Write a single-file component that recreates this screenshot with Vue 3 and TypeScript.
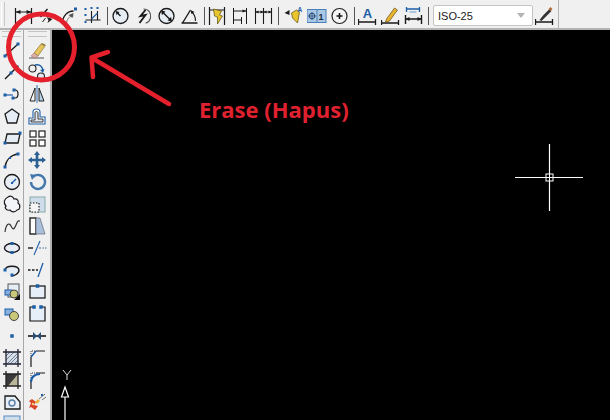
<script setup lang="ts">
const K = '#1a1a1a'
const B = '#1d5ea8'
const ln = (d: string, c = K, w = 1.2) => `<path d="${d}" fill="none" stroke="${c}" stroke-width="${w}"/>`
const node = (x: number, y: number, s = 3) => `<rect x="${x - s / 2}" y="${y - s / 2}" width="${s}" height="${s}" fill="${B}"/>`
const tri = (d: string, c = K) => `<path d="${d}" fill="${c}"/>`
const circ = (r = 7.5, fill = '#e6edf5') => `<circle cx="10" cy="10" r="${r}" fill="${fill}" stroke="${K}" stroke-width="1.3"/>`

const icons: Record<string, string> = {
  dimLinear: ln('M2 2V18M18 2V18M2 6H18') + tri('M2 6l5-2v4zM18 6l-5-2v4z'),
  dimAligned: ln('M4 11 11 3', K, 1.5) + tri('M10 11l6 2-5 4 1-3z') + ln('M6 16l3-4', K, 1),
  dimArc: ln('M3 17C3 10 8 5 14 5', K, 1.4) + ln('M7 18C7 13 10 10 14 10', '#777', 1) + node(16, 3, 3) + tri('M9 9l5-2-1 5z', '#555'),
  dimOrd: ln('M9 5V17M15 5V14M3 14H18', K, 1.1) + node(3, 3, 2) + node(3, 9, 2) + node(3, 16, 2) + node(9, 2, 2) + node(15, 2, 2) + ln('M9 13 15 7', B, 1.1),
  dimRadius: circ() + ln('M10 10 6 6', K, 1.5) + tri('M5 5l4 1-3 3z'),
  dimJog: ln('M10 3C15 3 18 7 17 12C16 15 14 17 12 17', '#555', 1.2) + ln('M12 4 7 10 12 9 6 17', K, 1.9),
  dimDia: circ() + ln('M6 6 14 14', K, 1.5) + tri('M4.5 4.5l4.5 1-3.5 3.5zM15.5 15.5l-4.5-1 3.5-3.5z'),
  dimAngle: ln('M2 17H18M3 17 11 4', K, 1.4) + ln('M12 6C15 8 16 11 16 15', K, 1.1) + tri('M11 4l4 2-3 2z'),
  dimQuick: ln('M2 1V19M17 1V19M2 4H17') + `<path d="M6 3 14 5 12 9 15 10 10 18 10 11 7 10z" fill="#e8c52d" stroke="#5c4a10" stroke-width=".7"/>`,
  dimBaseline: ln('M3 2V18M16 2V18M3 5H16M3 14H11M11 11V18', K, 1) + tri('M16 5l-4-1.5v3z'),
  dimCont: ln('M2 2V18M10 2V18M18 2V18M2 6H18', K, 1.1) + tri('M2 6l3-1.5v3zM10 6l-3-1.5v3zM10 6l3-1.5v3zM18 6l-3-1.5v3z'),
  leader: `<path d="M8 7 13 4 16 6 14 17 9 12z" fill="#e8c52d" stroke="#5c4a10" stroke-width=".7"/>` + tri('M1 7 6 4 6 9z') + `<text x="14" y="6" font-size="6.5" font-family='Liberation Sans' font-weight="700" fill="#1d5ea8">A</text>`,
  tol: `<rect x="0.5" y="3.5" width="19" height="13" fill="#a9c8e6" stroke="#4b7fb5"/>` + ln('M10.5 3.5V16.5', '#4b7fb5', 1) + `<circle cx="5.5" cy="10" r="2.8" fill="none" stroke="#26486e"/>` + ln('M5.5 6V14M1.5 10H9.5', '#26486e', .8) + `<text x="12" y="14" font-size="9" font-family='Liberation Sans' font-weight="700" fill="#1b2c44">1</text>`,
  center: `<circle cx="10" cy="10" r="7.5" fill="#f4f4f4" stroke="#222" stroke-width="1.2"/>` + ln('M7 10H13M10 7V13', K, 1.6),
  dimEdit: `<text x="10" y="12" text-anchor="middle" font-size="13" font-family='Liberation Sans' font-weight="700" fill="#1d5ea8">A</text>` + ln('M1 13V19M18 13V19M1 16H18', K, 1.3),
  dimTedit: ln('M1 14V19M18 14V19M1 17H18', K, 1.3) + `<path d="M6 13 14 2 17 4 9 15 5 16z" fill="#e6b52e" stroke="#6c4b14" stroke-width=".7"/>`,
  dimUpdate: ln('M3 3H16M3 1V6M16 1V6', B, 1.3) + ln('M2 9V18M18 9V18M2 13H18', K, 1.4) + tri('M2 13l4-2v4zM18 13l-4-2v4z') + ln('M6 6H13', '#78a3d2', 1.1),
  dimStyle: ln('M1 13V19M18 13V19M1 16H18', K, 1.3) + `<path d="M5 14 9 9 15 3 17 5 11 11 7 15z" fill="#333"/><path d="M14 3 16 1 18 3 16 5z" fill="#b06a38"/>`,

  line: ln('M3 16 16 4', K, 1.3) + node(3, 16, 3) + node(16, 4, 3),
  xline: ln('M3 17 16 4', K, 1.5) + node(9, 11, 3) + node(15, 5, 3),
  pline: ln('M4 11H11', B, 1.2) + ln('M11 6H13C17 6 17 14 13 14H11', K, 1.2) + node(3, 11, 3) + node(11, 14, 3) + node(12, 6, 3),
  polygon: `<path d="M10 3 17 8 14.5 17H5.5L3 8z" fill="#e6edf5" stroke="#1a1a1a" stroke-width="1.3"/>`,
  rect: `<path d="M5 6H18L16 15H3z" fill="#e6edf5" stroke="#1a1a1a" stroke-width="1.3"/>` + node(3, 15, 3) + node(18, 5, 3),
  arc: ln('M3 17C4 10 9 5 16 4', K, 1.4) + node(3, 17, 3) + node(8, 8, 2) + node(16, 4, 3),
  circle: circ() + ln('M10 11 14 7', B, 1.5) + node(10, 11, 2),
  cloud: `<path d="M6 3C9 1 11 3 12 5 15 4 17 7 16 9 19 11 18 16 15 16 13 19 9 18 8 16 5 17 2 14 4 12 1 9 2 5 6 3z" fill="#f2f4f8" stroke="#1a1a1a" stroke-width="1.2"/>`,
  spline: ln('M3 16C4 8 7 6 9 10S12 14 14 9 16 5 18 5', '#333', 1.2),
  ellipse: `<ellipse cx="10" cy="10" rx="7.5" ry="4.5" fill="#e6edf5" stroke="#1a1a1a" stroke-width="1.4"/>` + node(10, 5.5, 3) + node(10, 14.5, 3),
  ellarc: `<ellipse cx="10" cy="10.5" rx="7" ry="5" fill="#e6edf5"/>` + ln('M3 10C4 5 16 5 17 10C17 14 12 16 9 16', K, 1.4) + node(10, 15, 3) + node(3, 10, 3),
  insert: `<rect x="6" y="2" width="11" height="13" fill="#e6edf5" stroke="#555"/><rect x="3" y="8" width="7" height="5" fill="#86aede" stroke="#1d5ea8"/><circle cx="12" cy="12" r="4" fill="#c8c878" stroke="#444"/>` + tri('M12 18 18 12V18z', '#111'),
  block: `<rect x="3" y="5" width="8" height="6" fill="#86aede" stroke="#1d5ea8"/><circle cx="12" cy="12" r="4.5" fill="#c8c878" stroke="#444"/>`,
  point: node(10, 10, 3.5),
  hatch: `<rect x="4" y="4" width="12" height="12" fill="#d8dfe8"/>` + ln('M5 16 16 5M8 16 16 8M4 12 12 4M4 8 8 4M12 16 16 12', '#6c7f96', 1) + ln('M4 1V19M16 1V19M1 4H19M1 16H19', '#223', 1.3),
  gradient: `<rect x="4" y="4" width="12" height="12" fill="#3a3a3a"/><path d="M16 4V16H6z" fill="#b9b69a"/>` + ln('M4 1V19M16 1V19M1 4H19M1 16H19', '#222', 1.3),
  region: `<path d="M3 4H13L18 10V17H3z" fill="#e8eff6" stroke="#1a1a1a" stroke-width="1.3"/><circle cx="10" cy="11" r="3" fill="none" stroke="#5a7ea8" stroke-width="1.4"/>`,

  erase: ln('M2 18H17', '#444', .9) + `<path d="M7 13 14 4 18 6 11 16z" fill="#e5c45c" stroke="#7d6a2a" stroke-width=".6"/><path d="M4 16 7 13 11 16 8 18z" fill="#dbb0a8" stroke="#a05a50" stroke-width=".5"/><path d="M14 4 15 3 19 5 18 6z" fill="#8a7a3a"/>`,
  copy: `<circle cx="5.5" cy="6.5" r="3.5" fill="#f0f0f0" stroke="#222" stroke-width="1.1"/><circle cx="14" cy="14.5" r="3.5" fill="#dfe8f2" stroke="#222" stroke-width="1.1"/>` + ln('M8 3C12 2 15 4 16 8', B, 1.4) + tri('M13 8l4.5-1-1.5 4z', B),
  mirror: `<path d="M3 17 8 4V17z" fill="#f8f8f8" stroke="#222" stroke-width="1"/><path d="M17 17 12 4V17z" fill="#b7d0ea" stroke="#222" stroke-width="1"/>` + ln('M10 1V19', B, .9),
  offset: `<path d="M2 18V12H6V6C6 2 13 2 13 6V11H18V18z" fill="#fff" stroke="#1d5ea8" stroke-width="1.1"/><path d="M4 16V14H8V7C8 5 11 5 11 7V13H16V16z" fill="#dfe8f2" stroke="#222" stroke-width=".9"/>`,
  array: `<rect x="3" y="3" width="6" height="6" fill="#fff" stroke="#222" stroke-width="1.2"/><rect x="12" y="3" width="6" height="6" fill="#fff" stroke="#222" stroke-width="1.2"/><rect x="3" y="12" width="6" height="6" fill="#fff" stroke="#222" stroke-width="1.2"/><rect x="12" y="12" width="6" height="6" fill="#fff" stroke="#222" stroke-width="1.2"/>`,
  move: tri('M10 1 13 5H11.3V8.7H15V7L19 10 15 13V11.3H11.3V15H13L10 19 7 15H8.7V11.3H5V13L1 10 5 7V8.7H8.7V5H7z', '#2c5f93'),
  rotate: ln('M6 5A7 7 0 1 1 4 10', '#4378ad', 2.4) + tri('M3 2 9 3 5 8z', '#4378ad'),
  scale: `<rect x="3" y="3" width="15" height="15" fill="#cfdcea" stroke="#8aa" stroke-width="1"/><rect x="3" y="9" width="9" height="9" fill="#f4f4f4" stroke="#222" stroke-width="1.2" stroke-dasharray="1.5 1.5"/>`,
  stretch: `<rect x="3" y="2" width="6" height="16" fill="#fff" stroke="#111" stroke-width="1.3"/><path d="M9 2H13L18 18H9z" fill="#a9c0da" stroke="#667" stroke-width=".7"/>`,
  trim: ln('M1 10H6', K, 1.4) + ln('M7 17 13 3', B, 1.1) + ln('M12 10H14M15.5 10H17M18 10H19.5', '#4a6a90', 1.1),
  extend: ln('M1 10H3.5M5 10H7.5M9 10H11', K, 1.3) + ln('M11 17 16 3', B, 1.3),
  breakPt: `<rect x="3" y="4" width="15" height="12" fill="#e6eef7" stroke="#111" stroke-width="1.2"/>` + node(10.5, 4, 3.5),
  breakTw: `<path d="M6 3H3V17H18V3H15" fill="#e6eef7" stroke="#111" stroke-width="1.2"/>` + node(7, 3, 3.5) + node(14, 3, 3.5),
  join: ln('M1 10H19', K, 1.6) + tri('M6 6 10 10 6 14zM14 6 10 10 14 14z', '#2c4f7a'),
  chamfer: ln('M4 19V9M9 3H18', K, 1.2) + ln('M4 9 9 3', B, 1.5) + `<path d="M4 8V3H8" fill="none" stroke="#333" stroke-width="1" stroke-dasharray="1 1"/>`,
  fillet: `<path d="M4 8V3H8" fill="none" stroke="#333" stroke-width="1" stroke-dasharray="1 1"/>` + ln('M4 19V10M9 3H18', K, 1.2) + ln('M4 12C4 7 8 4 13 4', B, 2.1),
  explode: `<path d="M5 7 9 10 7 13 11 14 8 18 4 15 2 16 4 11 2 9z" fill="#d8452a"/><path d="M8 10 11 7 13 9 10 12z" fill="#e8b13c"/><circle cx="6" cy="12" r="1.2" fill="#f4d070"/>` + ln('M12 7 18 2M15 8 19 5', '#777', 1) + node(15, 3, 2),
  cutoff: `<rect x="2" y="2" width="16" height="20" fill="#cfdcea" stroke="#5a88c0"/>`,
}

const topGroups: { cls: string; tools: string[] }[] = [
  { cls: 'g1', tools: ['dimLinear', 'dimAligned', 'dimArc', 'dimOrd'] },
  { cls: 'g2', tools: ['dimRadius', 'dimJog', 'dimDia', 'dimAngle'] },
  { cls: 'g3', tools: ['dimQuick', 'dimBaseline', 'dimCont'] },
  { cls: 'g4', tools: ['leader', 'tol', 'center'] },
  { cls: 'g5', tools: ['dimEdit', 'dimTedit', 'dimUpdate'] },
]
const drawTools = ['line', 'xline', 'pline', 'polygon', 'rect', 'arc', 'circle', 'cloud', 'spline', 'ellipse', 'ellarc', 'insert', 'block', 'point', 'hatch', 'gradient', 'region', 'cutoff']
const modifyTools = ['erase', 'copy', 'mirror', 'offset', 'array', 'move', 'rotate', 'scale', 'stretch', 'trim', 'extend', 'breakPt', 'breakTw', 'join', 'chamfer', 'fillet', 'explode']
</script>

<template>
  <div class="screen">
    <header class="topbar">
      <div class="tools">
        <div class="grip-v"></div>
        <template v-for="(g, i) in topGroups" :key="g.cls">
          <span v-if="i > 0" class="sep" :class="g.cls"></span>
          <svg v-for="t in g.tools" :key="t" class="tool" viewBox="0 0 20 20" v-html="icons[t]"></svg>
        </template>
        <span class="sep g6"></span>
        <div class="combo">
          <span class="combo-text">ISO-25</span>
          <span class="combo-arrow"></span>
        </div>
        <svg class="tool" viewBox="0 0 20 20" v-html="icons.dimStyle"></svg>
      </div>
    </header>

    <main class="body">
      <aside class="vbar draw">
        <div class="grip-h"></div>
        <svg v-for="t in drawTools" :key="t" class="vtool" viewBox="0 0 20 20" v-html="icons[t]"></svg>
      </aside>
      <aside class="vbar modify">
        <div class="grip-h"></div>
        <svg v-for="t in modifyTools" :key="t" class="vtool" viewBox="0 0 20 20" v-html="icons[t]"></svg>
      </aside>
      <section class="canvas">
        <svg class="cross" width="70" height="70" viewBox="0 0 70 70">
          <path d="M1 34.5H32M39 34.5H69M35.5 1V31M35.5 38V68" stroke="#fff" stroke-width="1.2" fill="none" />
          <rect x="32" y="31" width="7" height="7" fill="none" stroke="#fff" />
          <path d="M35.5 31V38M32 34.5H39" stroke="#fff" stroke-width="1" />
        </svg>
        <svg class="ucs" width="20" height="52" viewBox="0 0 20 52">
          <path d="M7 1 11 6 15 1M11 6V11" stroke="#ddd" stroke-width="1" fill="none" />
          <path d="M9 18 12.5 28H5.5z" fill="none" stroke="#fff" stroke-width="1.2" />
          <path d="M9 28V52" stroke="#fff" stroke-width="1.2" />
        </svg>
      </section>
    </main>

    <svg class="marks" width="610" height="420" viewBox="0 0 610 420">
      <circle cx="41.5" cy="47" r="33" fill="none" stroke="#e3202c" stroke-width="5" />
      <path d="M169 104 92 58M108 52 91.5 57.5 93 77" fill="none" stroke="#e3202c" stroke-width="4.5" stroke-linecap="round" stroke-linejoin="round" />
    </svg>
    <div class="label">Erase (Hapus)</div>
  </div>
</template>

<style>
html, body { margin: 0; background: #000; overflow: hidden; }
</style>

<style scoped>
.screen {
  position: relative;
  width: 610px;
  height: 420px;
  overflow: hidden;
  display: flex;
  flex-direction: column;
  background: #f0f0f0;
  font-family: "Liberation Sans", Arial, sans-serif;
}
.topbar {
  height: 30px;
  flex: none;
  box-sizing: border-box;
  border-bottom: 2px solid #b4b4b4;
  background: #f0f0f0;
}
.tools {
  width: 559px;
  height: 28px;
  box-sizing: border-box;
  display: flex;
  align-items: flex-end;
  padding-bottom: 2px;
  border-right: 1px solid #b4b4b4;
}
.grip-v {
  width: 2px;
  height: 24px;
  margin: 0 7px 0 1px;
  border-left: 1px solid #fff;
  border-right: 1px solid #c8c8c8;
}
.tool {
  width: 20px;
  height: 20px;
  padding: 0 1.5px;
  flex: none;
}
.sep {
  width: 1px;
  height: 18px;
  margin: 0 1px 1px 3px;
  background: #555;
  flex: none;
}
.sep.g4 { margin-right: 3px; }
.combo {
  width: 100px;
  height: 21px;
  box-sizing: border-box;
  margin-left: 3px;
  border: 1px solid #c4c4c4;
  border-radius: 2px;
  background: #fff;
  display: flex;
  align-items: center;
  justify-content: space-between;
  padding: 0 7px 0 4px;
  flex: none;
}
.combo-text {
  font-size: 11px;
  color: #222;
}
.combo-arrow {
  width: 0;
  height: 0;
  border-left: 4px solid transparent;
  border-right: 4px solid transparent;
  border-top: 5px solid #b4b4b4;
}
.body {
  flex: 1;
  display: flex;
  min-height: 0;
  background: #000;
}
.vbar {
  background: #f0f0f0;
  display: flex;
  flex-direction: column;
  align-items: center;
  box-sizing: border-box;
  overflow: hidden;
}
.draw { width: 24px; border-right: 1px solid #a8a8a8; }
.modify { width: 28px; border-right: 2px solid #b0b0b0; }
.grip-h {
  width: 19px;
  height: 4px;
  margin: 1px 0 2px;
  border-top: 1px solid #c4c4c4;
  border-bottom: 1px solid #c4c4c4;
  flex: none;
}
.vtool {
  width: 20px;
  height: 20px;
  padding: 1px 0;
  flex: none;
}
.canvas {
  flex: 1;
  position: relative;
  background: #000;
}
.cross {
  position: absolute;
  left: 462px;
  top: 113px;
}
.ucs {
  position: absolute;
  left: 4px;
  top: 339px;
}
.marks {
  position: absolute;
  left: 0;
  top: 0;
  pointer-events: none;
}
.label {
  position: absolute;
  left: 199px;
  top: 94px;
  color: #e0212f;
  font: 700 22px "Open Sans", Lato, sans-serif;
  white-space: nowrap;
}
</style>
